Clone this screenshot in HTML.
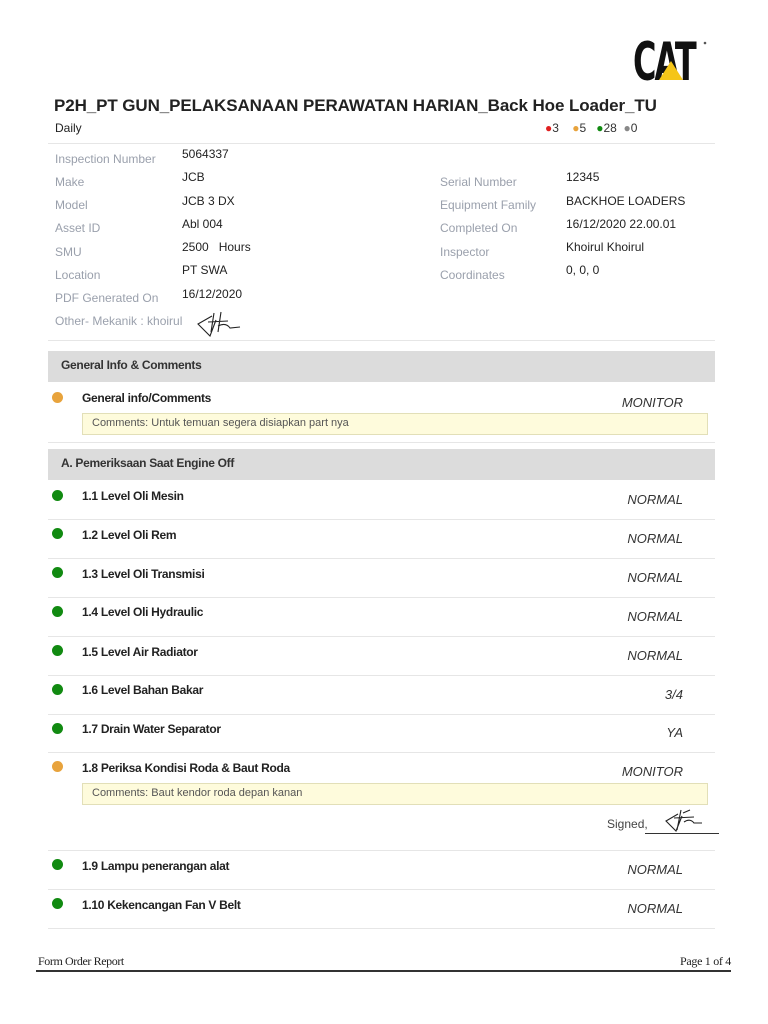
<!DOCTYPE html>
<html><head><meta charset="utf-8"><style>
*{margin:0;padding:0;box-sizing:border-box}
body{width:768px;height:1024px;background:#fff;position:relative;font-family:"Liberation Sans",Arial,sans-serif;overflow:hidden}
.a{position:absolute;white-space:nowrap}
.lbl{color:#9aa0ac;font-size:12px}
.val{color:#222;font-size:12px}
.hl{position:absolute;left:48px;width:667px;height:1px;background:#e6e6e6}
.bar{position:absolute;left:48px;width:667px;height:31px;background:#dcdcdc;font-size:12px;font-weight:bold;color:#333;padding:7px 0 0 13px;letter-spacing:-0.3px}
.dot{position:absolute;left:52px;width:11px;height:11px;border-radius:50%}
.g{background:#118a11}.o{background:#e8a33c}
.it{position:absolute;left:82px;font-size:12px;font-weight:bold;color:#222;letter-spacing:-0.3px}
.st{position:absolute;right:85px;font-size:13px;font-style:italic;color:#333}
.cm{position:absolute;left:82px;width:626px;height:22px;background:#fefbdc;border:1px solid #e2dfb8;font-size:11px;color:#555;padding:3px 0 0 9px}
</style></head><body>
<svg class="a" style="left:632px;top:36px" width="80" height="48" viewBox="0 0 80 48">
<g transform="translate(1,44) scale(0.64,1.05)"><text x="0" y="0" font-family="DejaVu Sans" font-weight="bold" font-size="50" fill="#111" letter-spacing="-3">CAT</text></g>
<polygon points="39,25 51,44 27,44" fill="#f5c518"/>
<circle cx="73" cy="7" r="1.3" fill="#555"/>
</svg>
<div class="a" style="left:54px;top:96px;font-size:17px;font-weight:bold;color:#222;letter-spacing:-0.1px">P2H_PT GUN_PELAKSANAAN PERAWATAN HARIAN_Back Hoe Loader_TU</div>
<div class="a" style="left:55px;top:121px;font-size:12px;color:#222">Daily</div>
<div class="a" style="left:545px;top:121px;font-size:12px;color:#333"><span style="color:#e02020">●</span>3 &nbsp;&nbsp;&nbsp;<span style="color:#e8a33c">●</span>5 &nbsp;&nbsp;<span style="color:#118a11">●</span>28 &nbsp;<span style="color:#888">●</span>0</div>
<div class="hl" style="top:143px"></div>
<div class="a lbl" style="left:55px;top:152px">Inspection Number</div><div class="a val" style="left:182px;top:147px">5064337</div>
<div class="a lbl" style="left:55px;top:175px">Make</div><div class="a val" style="left:182px;top:170px">JCB</div>
<div class="a lbl" style="left:55px;top:198px">Model</div><div class="a val" style="left:182px;top:194px">JCB 3 DX</div>
<div class="a lbl" style="left:55px;top:221px">Asset ID</div><div class="a val" style="left:182px;top:217px">Abl 004</div>
<div class="a lbl" style="left:55px;top:245px">SMU</div><div class="a val" style="left:182px;top:240px">2500 &nbsp; Hours</div>
<div class="a lbl" style="left:55px;top:268px">Location</div><div class="a val" style="left:182px;top:263px">PT SWA</div>
<div class="a lbl" style="left:55px;top:291px">PDF Generated On</div><div class="a val" style="left:182px;top:287px">16/12/2020</div>
<div class="a lbl" style="left:55px;top:314px">Other- Mekanik : khoirul</div>
<svg class="a" style="left:196px;top:310px" width="46" height="28" viewBox="0 0 46 28"><path d="M16 6 L2 14 L14 26 L20 10 M18 3 L15 22 M25 2 L22 22 M12 12 L32 11 M22 16 Q30 12 34 18 L44 17" stroke="#222" fill="none" stroke-width="1.1"/></svg>
<div class="a lbl" style="left:440px;top:175px">Serial Number</div><div class="a val" style="left:566px;top:170px">12345</div>
<div class="a lbl" style="left:440px;top:198px">Equipment Family</div><div class="a val" style="left:566px;top:194px">BACKHOE LOADERS</div>
<div class="a lbl" style="left:440px;top:221px">Completed On</div><div class="a val" style="left:566px;top:217px">16/12/2020 22.00.01</div>
<div class="a lbl" style="left:440px;top:245px">Inspector</div><div class="a val" style="left:566px;top:240px">Khoirul Khoirul</div>
<div class="a lbl" style="left:440px;top:268px">Coordinates</div><div class="a val" style="left:566px;top:263px">0, 0, 0</div>
<div class="hl" style="top:340px"></div>
<div class="bar" style="top:351px">General Info &amp; Comments</div>
<div class="dot o" style="top:392px"></div><div class="it" style="top:391px">General info/Comments</div><div class="st" style="top:395px">MONITOR</div>
<div class="cm" style="top:413px">Comments: Untuk temuan segera disiapkan part nya</div>
<div class="hl" style="top:442px"></div>
<div class="bar" style="top:449px">A. Pemeriksaan Saat Engine Off</div>
<div class="dot g" style="top:490px"></div><div class="it" style="top:489px">1.1 Level Oli Mesin</div><div class="st" style="top:492px">NORMAL</div><div class="hl" style="top:519px"></div>
<div class="dot g" style="top:528px"></div><div class="it" style="top:528px">1.2 Level Oli Rem</div><div class="st" style="top:531px">NORMAL</div><div class="hl" style="top:558px"></div>
<div class="dot g" style="top:567px"></div><div class="it" style="top:567px">1.3 Level Oli Transmisi</div><div class="st" style="top:570px">NORMAL</div><div class="hl" style="top:597px"></div>
<div class="dot g" style="top:606px"></div><div class="it" style="top:605px">1.4 Level Oli Hydraulic</div><div class="st" style="top:609px">NORMAL</div><div class="hl" style="top:636px"></div>
<div class="dot g" style="top:645px"></div><div class="it" style="top:645px">1.5 Level Air Radiator</div><div class="st" style="top:648px">NORMAL</div><div class="hl" style="top:675px"></div>
<div class="dot g" style="top:684px"></div><div class="it" style="top:683px">1.6 Level Bahan Bakar</div><div class="st" style="top:687px">3/4</div><div class="hl" style="top:714px"></div>
<div class="dot g" style="top:723px"></div><div class="it" style="top:722px">1.7 Drain Water Separator</div><div class="st" style="top:725px">YA</div><div class="hl" style="top:752px"></div>
<div class="dot o" style="top:761px"></div><div class="it" style="top:761px">1.8 Periksa Kondisi Roda &amp; Baut Roda</div><div class="st" style="top:764px">MONITOR</div>
<div class="cm" style="top:783px">Comments: Baut kendor roda depan kanan</div>
<div class="a" style="left:607px;top:817px;font-size:12px;color:#444">Signed,</div>
<svg class="a" style="left:664px;top:808px" width="42" height="26" viewBox="0 0 42 26"><path d="M14 6 L2 13 L12 23 L18 8 M17 2 L13 22 M10 10 L30 9 M20 14 Q26 10 30 15 L38 15 M19 5 L26 2" stroke="#222" fill="none" stroke-width="1.1"/></svg>
<div class="a" style="left:645px;top:833px;width:74px;height:1px;background:#333"></div>
<div class="hl" style="top:850px"></div>
<div class="dot g" style="top:859px"></div><div class="it" style="top:859px">1.9 Lampu penerangan alat</div><div class="st" style="top:862px">NORMAL</div><div class="hl" style="top:889px"></div>
<div class="dot g" style="top:898px"></div><div class="it" style="top:898px">1.10 Kekencangan Fan V Belt</div><div class="st" style="top:901px">NORMAL</div><div class="hl" style="top:928px"></div>
<div class="a" style="left:38px;top:954px;font-family:'Liberation Serif',serif;font-size:12px;color:#222;letter-spacing:-0.4px">Form Order Report</div>
<div class="a" style="right:37px;top:954px;font-family:'Liberation Serif',serif;font-size:12px;color:#222;letter-spacing:-0.3px">Page 1 of 4</div>
<div class="a" style="left:36px;top:970px;width:695px;height:2px;background:#333"></div>
</body></html>
